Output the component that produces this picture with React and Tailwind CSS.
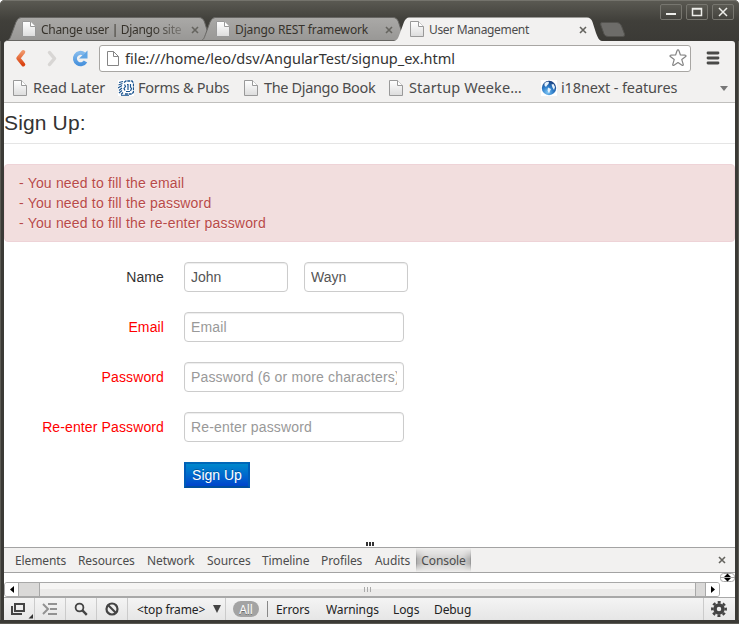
import React from 'react';
import clsx from 'clsx';

const tabs = [
  { title: 'Change user | Django site', tracking: 'tracking-[-0.31px]', fade: true },
  { title: 'Django REST framework', tracking: 'tracking-[-0.12px]' },
  { title: 'User Management', tracking: 'tracking-[-0.34px]', active: true },
];

const bookmarks = [
  { label: 'Read Later', width: 'w-[105px]', icon: 'page', tracking: 'tracking-[-0.1px]' },
  { label: 'Forms & Pubs', width: 'w-[126px]', icon: 'irs', tracking: 'tracking-[-0.28px]' },
  { label: 'The Django Book', width: 'w-[145px]', icon: 'page', tracking: 'tracking-[-0.35px]' },
  { label: 'Startup Weeke…', width: 'w-[152px]', icon: 'page', tracking: 'tracking-[0.12px]' },
  { label: 'i18next - features', width: 'w-[150px]', icon: 'globe', tracking: 'tracking-[-0.13px]' },
];

const panels = [
  { label: 'Elements', width: 'w-[63px]' },
  { label: 'Resources', width: 'w-[69px]' },
  { label: 'Network', width: 'w-[60px]' },
  { label: 'Sources', width: 'w-[55px]' },
  { label: 'Timeline', width: 'w-[59px]' },
  { label: 'Profiles', width: 'w-[54px]' },
  { label: 'Audits', width: 'w-[41px]' },
];

const filters = [
  { label: 'Errors', width: 'w-[50px]' },
  { label: 'Warnings', width: 'w-[67px]' },
  { label: 'Logs', width: 'w-[41px]' },
  { label: 'Debug', width: 'w-[40px]' },
];

const errors = [
  '- You need to fill the email',
  '- You need to fill the password',
  '- You need to fill the re-enter password',
];

const PageIcon = () => (
  <svg width="14" height="16" viewBox="0 0 14 16" className="shrink-0">
    <defs>
      <linearGradient id="page" x1="0" y1="0" x2="0" y2="1">
        <stop offset="0" stopColor="#fff" />
        <stop offset="1" stopColor="#dcdcdc" />
      </linearGradient>
    </defs>
    <path d="M.5.5h8l5 5v10H.5z" fill="url(#page)" stroke="#999" />
    <path d="M8.5.5v5h5" fill="#fff" stroke="#999" />
  </svg>
);

const IrsIcon = () => (
  <svg width="16" height="16" viewBox="0 0 16 16" className="shrink-0">
    <path fill="#fff" d="M0 0h16v16H0z" />
    <g fill="none" stroke="#1c5590">
      <path d="M1 2.500l4-1M.5 5l4-1.500M0 8l4-2.500M1 10.500l3-2.500M1 13l3-2.500M3 14.500l2-2" strokeWidth="1.200" />
      <path d="M6 2.500l2-1.500h6l1.500 2v9L14 14H7" strokeWidth="1.300" strokeDasharray="3 .8" />
      <path d="M6.500 4.500l1 2-1.500 2 1 2M9 4.500h1V10M8 11.500h4M12.500 4v3l1 1.500-1 2.500" strokeWidth="1.200" />
      <path d="M3 15.300h8" />
    </g>
  </svg>
);

const GlobeIcon = () => (
  <svg width="16" height="16" viewBox="0 0 16 16" className="shrink-0">
    <defs>
      <radialGradient id="globe" cx=".4" cy=".8" r=".8">
        <stop offset="0" stopColor="#7cc4f4" />
        <stop offset=".5" stopColor="#2d7cc8" />
        <stop offset="1" stopColor="#1a3f7e" />
      </radialGradient>
    </defs>
    <path fill="#fff" d="M0 0h16v16H0z" />
    <circle cx="8" cy="8" r="7.200" fill="url(#globe)" />
    <path d="M3.500 3.500c1-1.500 3-2 4.500-1.500L7.500 4 6 5.500 5 7 3.500 5.500zM7 7.500l3 1.500-1 2-1 2.500-1.500-3zM10.500 4.500l2-.5 1.500 3-1 3-1.500-2.500z" fill="#e7f3fc" />
  </svg>
);

const BookmarkIcon = ({ name }) => {
  if (name === 'irs') return <IrsIcon />;
  if (name === 'globe') return <GlobeIcon />;
  return <PageIcon />;
};

const CloseIcon = () => (
  <svg width="8" height="8" viewBox="0 0 8 8" className="shrink-0">
    <path d="M1 1l6 6M7 1L1 7" stroke="#65645f" strokeWidth="1.600" />
  </svg>
);

const Tab = ({ title, tracking, active, fade }) => (
  <div className={clsx('relative h-6 w-[208px] shrink-0 -mr-[14px]', active && 'z-10')}>
    <svg width="208" height="24" viewBox="0 0 208 24" className="absolute inset-0">
      <defs>
        <linearGradient id="tab" x1="0" y1="0" x2="0" y2="1">
          <stop offset="0" stopColor="#aaa9a7" />
          <stop offset="1" stopColor="#989795" />
        </linearGradient>
      </defs>
      <path
        d="M0 24C4 23 4 21 6 16L10 5Q12 .5 15 .5H193Q197 .5 198.500 5L202 16C204 21 205 23.500 208 24Z"
        fill={active ? '#f2f1f0' : 'url(#tab)'}
      />
      {!active && (
        <path
          d="M0 24C4 23 4 21 6 16L10 5Q12 .5 15 .5H193Q197 .5 198.500 5L202 16C204 21 205 23.500 208 23.500H0"
          fill="none"
          stroke="#676663"
        />
      )}
    </svg>
    <div className="relative flex h-6 items-center pl-4">
      <PageIcon />
      <span
        className={clsx(
          'ml-[5px] mt-[2px] w-[141px] whitespace-nowrap text-[12px] leading-6',
          tracking,
          active ? 'text-[#4c4c4c]' : 'text-[#36322b]',
          fade && '[mask-image:linear-gradient(to_right,black_112px,rgba(0,0,0,0.3)_141px)]'
        )}
      >
        {title}
      </span>
      <span className="ml-[9px] mt-[2px]"><CloseIcon /></span>
    </div>
  </div>
);

const WindowButton = ({ children }) => (
  <div className="flex h-4 w-[22px] items-center justify-center rounded-[2px] border border-[#77766f] bg-gradient-to-b from-[#5b5a53] to-[#44433e]">
    <svg width="12" height="12" viewBox="0 0 12 12" fill="none" stroke="#eeeeea" strokeWidth="1.500">
      {children}
    </svg>
  </div>
);

const Toolbar = () => (
  <div className="flex h-[34px] items-center rounded-t-[3px] bg-[#f2f1f0]">
    <svg width="95" height="34" viewBox="0 0 95 34" fill="none" className="shrink-0">
      <defs>
        <linearGradient id="back" x1="0" y1="0" x2="0" y2="1">
          <stop offset="0" stopColor="#ef9466" />
          <stop offset="1" stopColor="#da4311" />
        </linearGradient>
        <linearGradient id="reload" x1="0" y1="0" x2="0" y2="1">
          <stop offset="0" stopColor="#82b9ec" />
          <stop offset="1" stopColor="#4a93dd" />
        </linearGradient>
      </defs>
      <path d="M19.300 11l-5 6.300 5 6.200" stroke="url(#back)" strokeWidth="4" strokeLinecap="round" strokeLinejoin="round" />
      <path d="M45.500 11.500l5 6-5 6" stroke="#d8d6d4" strokeWidth="3.500" strokeLinecap="round" strokeLinejoin="round" />
      <path d="M80 13A5.700 5.700 0 1 0 81.500 20.500" stroke="url(#reload)" strokeWidth="4" />
      <path d="M83.500 9.500v8h-8.500z" fill="#61a5e4" />
    </svg>
    <div className="flex h-[27px] w-[592px] items-center rounded-[3px] border border-[#a8a6a3] bg-white pl-[7px] pr-[3px]">
      <svg width="12" height="15" viewBox="0 0 12 15" fill="none" stroke="#858585">
        <path d="M.5.5h6l5 5v9H.5zM6.500.5v5h5" />
      </svg>
      <span className="ml-[6px] mt-[2px] grow whitespace-nowrap text-[14.5px] tracking-[-0.02px] text-[#333]">
        file:///home/leo/dsv/AngularTest/signup_ex.html
      </span>
      <svg width="18" height="18" viewBox="0 0 18 18" fill="#fff" stroke="#858585" strokeWidth="1.200" strokeLinejoin="round">
        <path d="M9 .8q.7 0 .9.700l1.500 4.500 4.900.2q1.300.4.400 1.400l-3.900 3 1.500 5q-.2 1.200-1.300.7L9 13.600l-4 2.700q-1.200.5-1.300-.7l1.500-5-3.900-3q-.9-1 .4-1.400l4.900-.2 1.500-4.500Q8.300.8 9 .8z" />
      </svg>
    </div>
    <svg width="14" height="14" viewBox="0 0 14 14" className="ml-[15px]" stroke="#4a4a48" strokeWidth="2.800" strokeLinecap="round">
      <path d="M2 2h10M2 7h10M2 12h10" />
    </svg>
  </div>
);

const TitleBar = () => (
  <div className="flex h-[41px] shrink-0 justify-between rounded-t-[5px] border-t border-[#74736c] bg-gradient-to-b from-[#5a5952] via-[#403f3a] via-50% to-[#3b3a36] pl-[6px] pr-[5px]">
    <div className="flex items-end">
      {tabs.map(tab => <Tab key={tab.title} {...tab} />)}
      <svg width="25" height="15" viewBox="0 0 25 15" className="relative z-10 mb-[4px] ml-[12px]">
        <path d="M2 .5h15Q20 .5 21.500 4l3 8q.8 2.500-2 2.500H8Q5 14.500 4 12L.8 3Q0 .5 2 .5z" fill="#6d6c69" stroke="#53524e" />
      </svg>
    </div>
    <div className="mt-[3px] flex gap-1">
      <WindowButton><path d="M1 8h10" strokeWidth="2" /></WindowButton>
      <WindowButton><path d="M1.500 2.500h9v7h-9zM1 3h10" /></WindowButton>
      <WindowButton><path d="M2 2l8 8M10 2l-8 8" /></WindowButton>
    </div>
  </div>
);

const Field = ({ label, invalid, children }) => (
  <div className="mb-5 flex h-[30px]">
    <label className={clsx('w-40 pt-[5px] text-right tracking-[0.12px]', invalid ? 'text-[#f00]' : 'text-[#333]')}>{label}</label>
    <div className="ml-5 flex gap-4">{children}</div>
  </div>
);

const Input = ({ small, ...props }) => (
  <input
    {...props}
    className={clsx(
      'h-[30px] rounded-[4px] border border-[#ccc] bg-white px-[6px] text-[#555] shadow-[inset_0_1px_1px_rgba(0,0,0,0.075)] placeholder:tracking-[0.16px] placeholder:text-[#999]',
      small ? 'w-[104px]' : 'w-[220px]'
    )}
  />
);

const SignUp = () => (
  <main className="flex min-h-0 grow flex-col bg-white font-['Liberation_Sans',sans-serif] text-sm leading-5">
    <h1 className="h-[41px] border-b border-[#e5e5e5] text-[21px] leading-10 tracking-[0.15px] text-[#333]">Sign Up:</h1>
    <div className="mt-5 h-[78px] rounded-[4px] border border-[#eed3d7] bg-[#f2dede] px-[14px] py-2 tracking-[0.18px] text-[#b94a48] [text-shadow:0_1px_0_rgba(255,255,255,0.5)]">
      {errors.map(error => <p key={error}>{error}</p>)}
    </div>
    <form className="mt-5">
      <Field label="Name">
        <Input small defaultValue="John" />
        <Input small defaultValue="Wayn" />
      </Field>
      <Field label="Email" invalid><Input placeholder="Email" /></Field>
      <Field label="Password" invalid><Input type="password" placeholder="Password (6 or more characters)" /></Field>
      <Field label="Re-enter Password" invalid><Input type="password" placeholder="Re-enter password" /></Field>
      <button type="button" className="ml-[180px] block h-[26px] w-[66px] border-2 border-x-[#005cb8] border-b-[#004f9e] border-t-[#0067b8] bg-gradient-to-b from-[#0088cc] to-[#0044cc] leading-[22px] text-white [text-shadow:0_-1px_0_rgba(0,0,0,0.25)]">
        Sign Up
      </button>
    </form>
    <div className="mb-[1px] ml-[362px] mt-auto flex gap-[1px]">
      <i className="h-1 w-[2px] bg-[#333]" />
      <i className="h-1 w-[2px] bg-[#333]" />
      <i className="h-1 w-[2px] bg-[#333]" />
    </div>
  </main>
);

const StatusCell = ({ children }) => (
  <div className="flex w-[31px] shrink-0 items-center justify-center border-r border-[#cbcbcb]">{children}</div>
);

const DevTools = () => (
  <section className="shrink-0 text-[12px] tracking-[-0.1px]">
    <div className="flex h-[26px] items-center border-y border-[#a3a3a3] bg-[#f2f1f0] pl-[11px] text-[#4c4c4c]">
      {panels.map(panel => <span key={panel.label} className={clsx('pt-[2px]', panel.width)}>{panel.label}</span>)}
      <span className="relative flex h-6 w-[55px] items-center justify-center pt-[2px]">
        <span className="absolute inset-0 border-x border-[#999] bg-[#d2d1d0] shadow-[inset_4px_0_5px_rgba(0,0,0,0.16),inset_-4px_0_5px_rgba(0,0,0,0.16)] [mask-image:linear-gradient(to_bottom,transparent,black_45%,black_65%,transparent)]" />
        <span className="relative">Console</span>
      </span>
      <span className="ml-auto mr-[9px]"><CloseIcon /></span>
    </div>
    <div className="flex h-[9px] justify-end bg-white">
      <svg width="15" height="9" viewBox="0 0 15 9">
        <rect x=".5" y=".5" width="14" height="8" rx="3" fill="#fff" stroke="#aaa" />
        <path d="M0 4.500h15" stroke="#aaa" />
        <path d="M4 4l3.500-3.500L11 4zM4 5l3.500 3.500L11 5z" fill="#000" />
      </svg>
    </div>
    <div className="flex h-[15px] bg-white">
      <div className="flex w-[716px] overflow-hidden rounded-[3px] border border-[#a8a8a8] bg-gradient-to-b from-[#f6f5f4] from-50% to-[#ebeae9] to-50%">
        <div className="flex w-[14px] items-center justify-center border-r border-[#a8a8a8] bg-white">
          <svg width="4" height="7" viewBox="0 0 4 7"><path d="M4 0v7L0 3.500z" /></svg>
        </div>
        <div className="w-[21px] border-r border-[#a8a8a8] bg-[#dad9d8]" />
        <div className="flex grow items-center justify-center gap-[2px]">
          <i className="h-[5px] w-px bg-[#aaa]" />
          <i className="h-[5px] w-px bg-[#aaa]" />
          <i className="h-[5px] w-px bg-[#aaa]" />
        </div>
        <div className="w-[11px] border-x border-[#a8a8a8] bg-[#dad9d8]" />
        <div className="flex w-[13px] items-center justify-center bg-white">
          <svg width="4" height="7" viewBox="0 0 4 7"><path d="M0 0v7l4-3.500z" /></svg>
        </div>
      </div>
    </div>
    <div className="flex h-[23px] border-t border-[#a8a8a8] bg-gradient-to-b from-[#f4f4f4] to-[#e6e6e6] text-[#222]">
      <StatusCell>
        <svg width="30" height="22" viewBox="0 0 30 22" fill="none" stroke="#444" strokeWidth="2" className="shrink-0">
          <path d="M11 6h9v7h-9zM8 8v8h10" />
          <path d="M29 16v4.500h-4.500z" fill="#333" stroke="none" />
        </svg>
      </StatusCell>
      <StatusCell>
        <svg width="16" height="12" viewBox="0 0 16 12" fill="none" stroke="#929292" strokeWidth="2">
          <path d="M1 1l5 5-5 5M6 1h9M8 6h7M6 11h9" />
        </svg>
      </StatusCell>
      <StatusCell>
        <svg width="14" height="14" viewBox="0 0 14 14" fill="none" stroke="#444">
          <circle cx="5.500" cy="5.500" r="3.900" strokeWidth="1.800" />
          <path d="M8.200 8.200l4.600 4.600" strokeWidth="2.400" />
        </svg>
      </StatusCell>
      <StatusCell>
        <svg width="14" height="14" viewBox="0 0 14 14" fill="none" stroke="#444" strokeWidth="2.200">
          <circle cx="7" cy="7" r="5.500" />
          <path d="M3 3l8 8" />
        </svg>
      </StatusCell>
      <div className="flex w-[98px] shrink-0 items-center border-r border-[#cbcbcb] pl-[9px]">
        <span className="w-[76px] pt-[2px]">&lt;top frame&gt;</span>
        <svg width="8" height="8" viewBox="0 0 8 8"><path d="M0 0h8L4 8z" fill="#444" /></svg>
      </div>
      <div className="flex grow items-center pl-[7px]">
        <span className="flex h-4 w-[26px] items-center justify-center rounded-full bg-[#a3a3a3] pt-px text-white [text-shadow:0_1px_0_rgba(0,0,0,0.35)]">All</span>
        <i className="ml-2 mr-2 h-4 w-px bg-[#888]" />
        {filters.map(filter => <span key={filter.label} className={clsx('pt-[2px]', filter.width)}>{filter.label}</span>)}
      </div>
      <div className="flex w-8 items-center justify-center border-l border-[#cbcbcb] pr-[2px]">
        <svg width="16" height="16" viewBox="0 0 16 16" fill="none" stroke="#444">
          <circle cx="8" cy="8" r="4" strokeWidth="3.500" />
          <circle cx="8" cy="8" r="6.700" strokeWidth="2.500" strokeDasharray="2.950 2.310" strokeDashoffset="1.470" />
        </svg>
      </div>
    </div>
  </section>
);

const App = () => (
  <div className="h-[624px] w-[739px] overflow-hidden bg-white font-['Noto_Sans',sans-serif]">
    <div className="flex h-full flex-col rounded-t-[5px] bg-[#3b3a36] shadow-[inset_1px_0_#5b5a54,inset_-1px_0_#5b5a54]">
      <TitleBar />
      <div className="mx-1 flex min-h-0 grow flex-col">
        <Toolbar />
        <nav className="flex h-7 shrink-0 items-center border-b border-[#c0bfbd] bg-[#f2f1f0] pb-px pl-[9px] text-[14.5px] text-[#4c4c4c]">
          {bookmarks.map(item => (
            <div key={item.label} className={clsx('flex shrink-0 items-center whitespace-nowrap', item.width, item.tracking)}>
              <BookmarkIcon name={item.icon} />
              <span className={item.icon === 'page' ? 'ml-[6px]' : 'ml-[4px]'}>{item.label}</span>
            </div>
          ))}
          <svg width="8" height="5" viewBox="0 0 8 5" className="ml-auto mr-[7px]">
            <path d="M0 0h8L4 5z" fill="#777" />
          </svg>
        </nav>
        <SignUp />
        <DevTools />
      </div>
      <div className="h-1 shrink-0 border-b border-[#5b5a54] bg-[#3b3a36]" />
    </div>
  </div>
);

export default App;
